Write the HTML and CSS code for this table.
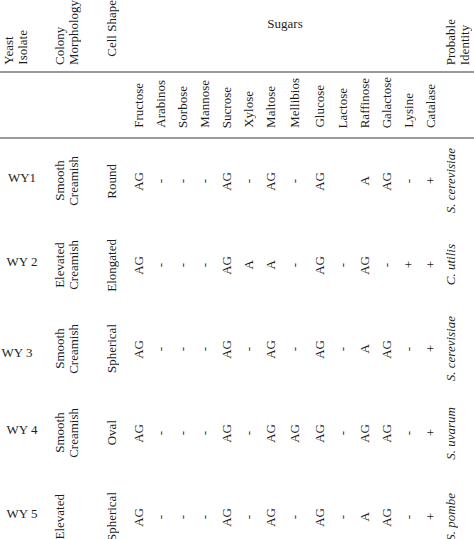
FILE: index.html
```html
<!DOCTYPE html>
<html lang="en">
<head>
<meta charset="utf-8">
<title>Yeast isolates</title>
<link rel="stylesheet" href="styles.css">
</head>
<body>
<div class="table">
  <div class="row head-main">
    <div class="cell c-isolate"><span class="vt">Yeast<br>Isolate</span></div>
    <div class="cell c-colony"><span class="vt">Colony<br>Morphology</span></div>
    <div class="cell c-shape"><span class="vt">Cell Shape</span></div>
    <div class="cell c-sugars">Sugars</div>
    <div class="cell c-identity"><span class="vt">Probable<br>Identity</span></div>
  </div>
  <div class="row head-sub">
    <div class="cell c-first-sugar"><span class="vt">Fructose</span></div>
    <div class="cell"><span class="vt">Arabinos</span></div>
    <div class="cell"><span class="vt">Sorbose</span></div>
    <div class="cell"><span class="vt">Mannose</span></div>
    <div class="cell"><span class="vt">Sucrose</span></div>
    <div class="cell"><span class="vt">Xylose</span></div>
    <div class="cell"><span class="vt">Maltose</span></div>
    <div class="cell"><span class="vt">Mellibios</span></div>
    <div class="cell"><span class="vt">Glucose</span></div>
    <div class="cell"><span class="vt">Lactose</span></div>
    <div class="cell"><span class="vt">Raffinose</span></div>
    <div class="cell"><span class="vt">Galactose</span></div>
    <div class="cell"><span class="vt">Lysine</span></div>
    <div class="cell"><span class="vt">Catalase</span></div>
  </div>

  <div class="row data">
    <div class="cell c-isolate"><span class="label">WY1</span></div>
    <div class="cell c-colony"><span class="vt">Smooth<br>Creamish</span></div>
    <div class="cell c-shape"><span class="vt">Round</span></div>
    <div class="cell"><span class="vt">AG</span></div>
    <div class="cell"><span class="vt">-</span></div>
    <div class="cell"><span class="vt">-</span></div>
    <div class="cell"><span class="vt">-</span></div>
    <div class="cell"><span class="vt">AG</span></div>
    <div class="cell"><span class="vt">-</span></div>
    <div class="cell"><span class="vt">AG</span></div>
    <div class="cell"><span class="vt">-</span></div>
    <div class="cell"><span class="vt">AG</span></div>
    <div class="cell"></div>
    <div class="cell"><span class="vt">A</span></div>
    <div class="cell"><span class="vt">AG</span></div>
    <div class="cell"><span class="vt">-</span></div>
    <div class="cell"><span class="vt">+</span></div>
    <div class="cell c-identity"><span class="vt species">S. cerevisiae</span></div>
  </div>

  <div class="row data">
    <div class="cell c-isolate"><span class="label">WY 2</span></div>
    <div class="cell c-colony"><span class="vt">Elevated<br>Creamish</span></div>
    <div class="cell c-shape"><span class="vt">Elongated</span></div>
    <div class="cell"><span class="vt">AG</span></div>
    <div class="cell"><span class="vt">-</span></div>
    <div class="cell"><span class="vt">-</span></div>
    <div class="cell"><span class="vt">-</span></div>
    <div class="cell"><span class="vt">AG</span></div>
    <div class="cell"><span class="vt">A</span></div>
    <div class="cell"><span class="vt">A</span></div>
    <div class="cell"><span class="vt">-</span></div>
    <div class="cell"><span class="vt">AG</span></div>
    <div class="cell"><span class="vt">-</span></div>
    <div class="cell"><span class="vt">AG</span></div>
    <div class="cell"><span class="vt">-</span></div>
    <div class="cell"><span class="vt">+</span></div>
    <div class="cell"><span class="vt">+</span></div>
    <div class="cell c-identity"><span class="vt species">C. utilis</span></div>
  </div>

  <div class="row data">
    <div class="cell c-isolate"><span class="label label-left">WY 3</span></div>
    <div class="cell c-colony"><span class="vt">Smooth<br>Creamish</span></div>
    <div class="cell c-shape"><span class="vt">Spherical</span></div>
    <div class="cell"><span class="vt">AG</span></div>
    <div class="cell"><span class="vt">-</span></div>
    <div class="cell"><span class="vt">-</span></div>
    <div class="cell"><span class="vt">-</span></div>
    <div class="cell"><span class="vt">AG</span></div>
    <div class="cell"><span class="vt">-</span></div>
    <div class="cell"><span class="vt">AG</span></div>
    <div class="cell"><span class="vt">-</span></div>
    <div class="cell"><span class="vt">AG</span></div>
    <div class="cell"><span class="vt">-</span></div>
    <div class="cell"><span class="vt">A</span></div>
    <div class="cell"><span class="vt">AG</span></div>
    <div class="cell"><span class="vt">-</span></div>
    <div class="cell"><span class="vt">+</span></div>
    <div class="cell c-identity"><span class="vt species">S. cerevisiae</span></div>
  </div>

  <div class="row data">
    <div class="cell c-isolate"><span class="label">WY 4</span></div>
    <div class="cell c-colony"><span class="vt">Smooth<br>Creamish</span></div>
    <div class="cell c-shape"><span class="vt">Oval</span></div>
    <div class="cell"><span class="vt">AG</span></div>
    <div class="cell"><span class="vt">-</span></div>
    <div class="cell"><span class="vt">-</span></div>
    <div class="cell"><span class="vt">-</span></div>
    <div class="cell"><span class="vt">AG</span></div>
    <div class="cell"><span class="vt">-</span></div>
    <div class="cell"><span class="vt">AG</span></div>
    <div class="cell"><span class="vt">AG</span></div>
    <div class="cell"><span class="vt">AG</span></div>
    <div class="cell"><span class="vt">-</span></div>
    <div class="cell"><span class="vt">AG</span></div>
    <div class="cell"><span class="vt">AG</span></div>
    <div class="cell"><span class="vt">-</span></div>
    <div class="cell"><span class="vt">+</span></div>
    <div class="cell c-identity"><span class="vt species">S. uvarum</span></div>
  </div>

  <div class="row data">
    <div class="cell c-isolate"><span class="label">WY 5</span></div>
    <div class="cell c-colony"><span class="vt">Elevated</span></div>
    <div class="cell c-shape"><span class="vt">Spherical</span></div>
    <div class="cell"><span class="vt">AG</span></div>
    <div class="cell"><span class="vt">-</span></div>
    <div class="cell"><span class="vt">-</span></div>
    <div class="cell"><span class="vt">-</span></div>
    <div class="cell"><span class="vt">AG</span></div>
    <div class="cell"><span class="vt">-</span></div>
    <div class="cell"><span class="vt">AG</span></div>
    <div class="cell"><span class="vt">-</span></div>
    <div class="cell"><span class="vt">AG</span></div>
    <div class="cell"><span class="vt">-</span></div>
    <div class="cell"><span class="vt">A</span></div>
    <div class="cell"><span class="vt">AG</span></div>
    <div class="cell"><span class="vt">-</span></div>
    <div class="cell"><span class="vt">+</span></div>
    <div class="cell c-identity"><span class="vt species">S. pombe</span></div>
  </div>
</div>
</body>
</html>
```

FILE: styles.css
```css
html, body {
  margin: 0;
  padding: 0;
  overflow: hidden;
  background: #ffffff;
}

body {
  font-family: "Liberation Serif", "Times New Roman", serif;
  font-size: 13px;
  color: #1e1e1e;
}

.table {
  display: flex;
  flex-direction: column;
  width: 474px;
  height: 539px;
  overflow: hidden;
}

.row {
  display: grid;
  grid-template-columns: 44px 52px 32px repeat(7, 22px) 25px 25px repeat(5, 22px) 32px;
  flex: none;
  box-sizing: border-box;
}

.head-main {
  height: 73px;
  border-bottom: 2px solid #9a9a9a;
}

.head-sub {
  height: 66px;
  border-bottom: 2px solid #9a9a9a;
}

.data {
  height: 84px;
}

.cell {
  display: flex;
  justify-content: center;
  align-items: center;
  min-width: 0;
}

.head-main .cell {
  align-items: flex-end;
  padding-bottom: 6px;
}

.head-sub .cell {
  align-items: flex-end;
  padding-bottom: 9px;
}

.c-first-sugar {
  grid-column: 4;
}

.vt {
  writing-mode: vertical-rl;
  transform: rotate(180deg);
  line-height: 14px;
  white-space: nowrap;
  text-align: start;
}

.data .vt {
  text-align: center;
}

.c-isolate {
  justify-content: flex-start;
  padding-left: 2px;
}

.data .c-isolate {
  justify-content: center;
  padding-left: 0;
  align-items: center;
}

.label {
  line-height: 16px;
  margin-top: -6px;
}

.label-left {
  margin-left: -10px;
  margin-top: 8px;
}

.c-colony {
  justify-content: flex-start;
  padding-left: 9px;
}

.head-main .c-shape {
  padding-bottom: 14px;
}

.c-sugars {
  grid-column: 4 / span 14;
  padding-left: 0;
}

.head-main .c-sugars {
  align-items: flex-start;
  padding-top: 16px;
  line-height: 16px;
}

.c-identity {
  justify-content: flex-start;
  padding-left: 2px;
}

.species {
  font-style: italic;
}
```
